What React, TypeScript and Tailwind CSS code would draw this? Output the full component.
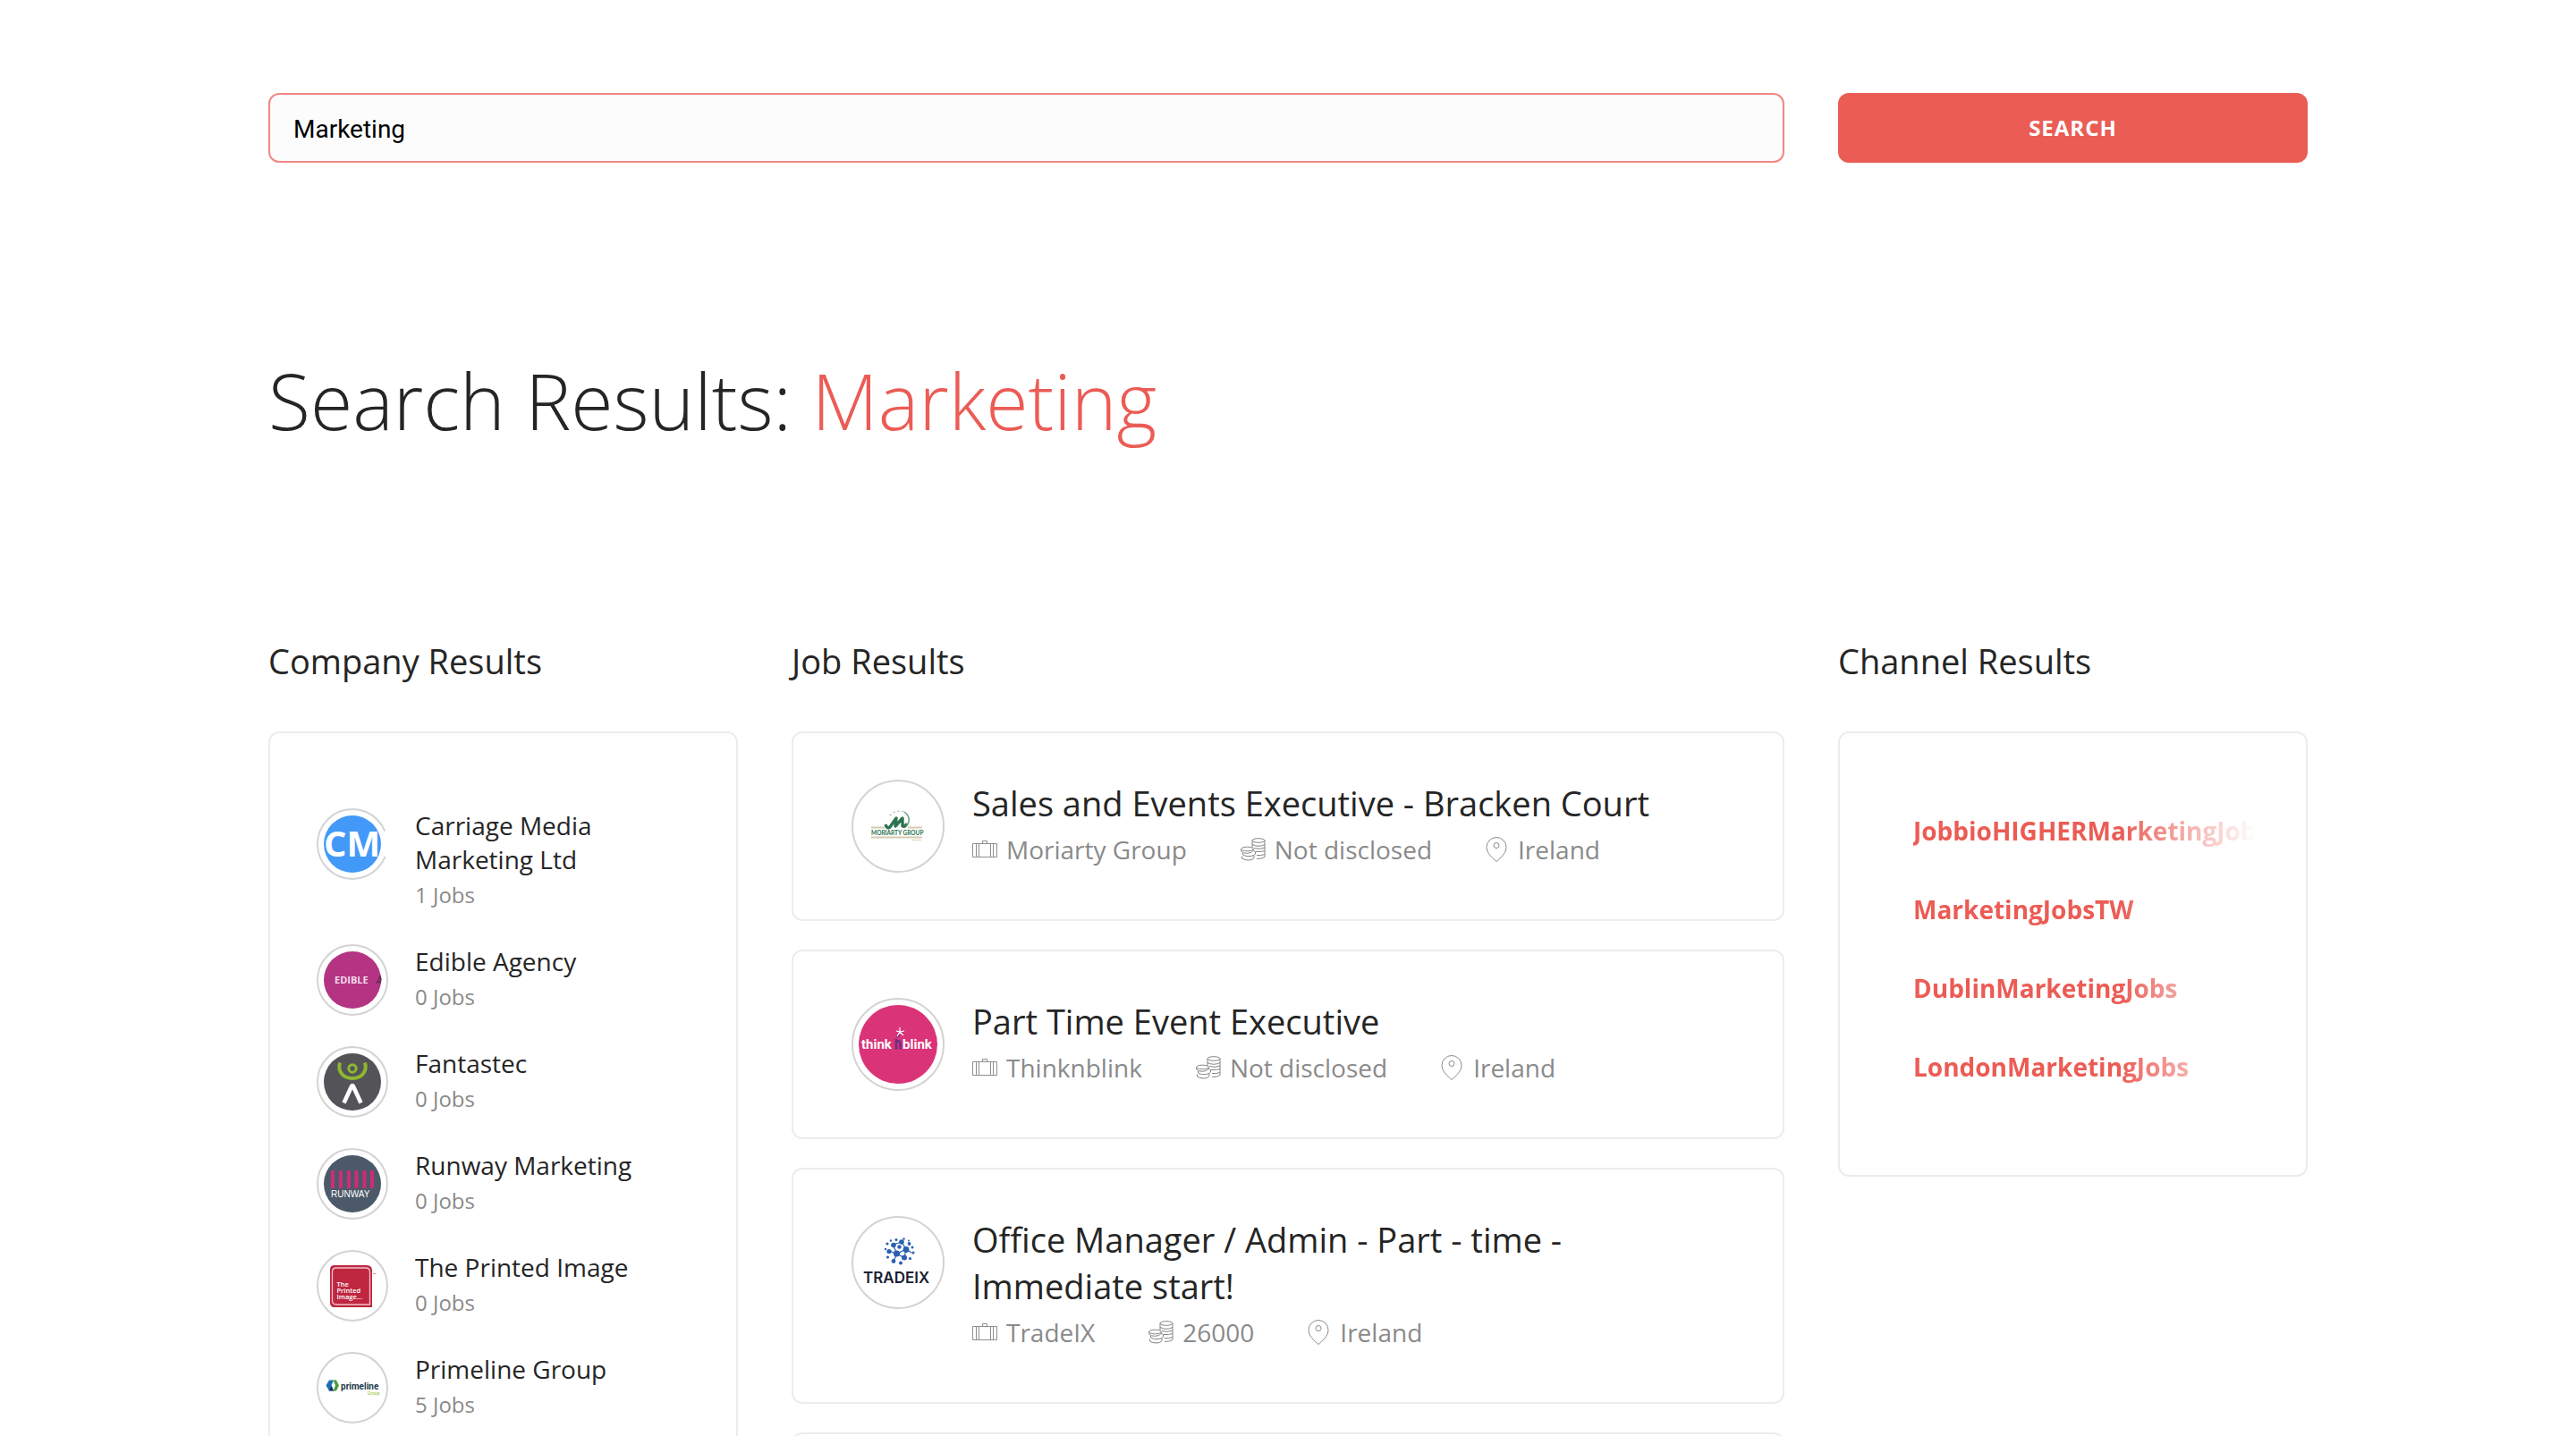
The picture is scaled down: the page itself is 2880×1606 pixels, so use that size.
import React, { useState } from "react";

const companies = [
  { name: "Carriage Media Marketing Ltd", jobs: 1, Logo: CarriageLogo },
  { name: "Edible Agency", jobs: 0, Logo: EdibleLogo },
  { name: "Fantastec", jobs: 0, Logo: FantastecLogo },
  { name: "Runway Marketing", jobs: 0, Logo: RunwayLogo },
  { name: "The Printed Image", jobs: 0, Logo: PrintedImageLogo },
  { name: "Primeline Group", jobs: 5, Logo: PrimelineLogo },
];

const jobs = [
  { title: "Sales and Events Executive - Bracken Court", company: "Moriarty Group", salary: "Not disclosed", location: "Ireland", Logo: MoriartyLogo },
  { title: "Part Time Event Executive", company: "Thinknblink", salary: "Not disclosed", location: "Ireland", Logo: ThinknblinkLogo },
  { title: "Office Manager / Admin - Part - time - Immediate start!", company: "TradeIX", salary: "26000", location: "Ireland", Logo: TradeixLogo },
];

const channels = ["JobbioHIGHERMarketingJobs", "MarketingJobsTW", "DublinMarketingJobs", "LondonMarketingJobs"];

/* Company logos, each drawn on an 80 or 104 unit disc */

function CarriageLogo() {
  return (
    <svg viewBox="0 0 80 80" className="block size-full" aria-hidden="true">
      <circle cx="40" cy="40" r="39" fill="#fff" stroke="#d3d3d3" strokeWidth="2" />
      <path d="M76 25h4v29h-4z" fill="#fff" />
      <circle cx="40" cy="40" r="32" fill="#4399f8" />
      <text x="8" y="54" fontFamily="Open Sans" fontWeight="700" fontSize="40" fill="#fff">CM</text>
    </svg>
  );
}

function EdibleLogo() {
  return (
    <svg viewBox="0 0 80 80" className="block size-full" aria-hidden="true">
      <circle cx="40" cy="40" r="39" fill="#fff" stroke="#d3d3d3" strokeWidth="2" />
      <circle cx="40" cy="40" r="32" fill="#b53383" />
      <text x="20" y="44" fontFamily="Open Sans" fontWeight="700" fontSize="11" fill="#f3dbe9">EDIBLE</text>
      <path d="M67 44l4-8 1 3-1 5M68 42h3" fill="none" stroke="#5f2c54" strokeWidth="1.4" />
    </svg>
  );
}

function FantastecLogo() {
  return (
    <svg viewBox="0 0 80 80" className="block size-full" aria-hidden="true">
      <circle cx="40" cy="40" r="39" fill="#fff" stroke="#d3d3d3" strokeWidth="2" />
      <circle cx="40" cy="40" r="32" fill="#545358" />
      <circle cx="40" cy="25" r="4.2" fill="none" stroke="#8cb82f" strokeWidth="3" />
      <path d="M26 18.500c-3 10 4 17.500 14 17.500s17-7.500 14-17.500" fill="none" stroke="#8cb82f" strokeWidth="4" />
      <path d="M30.500 63.500L39 45q1-2 2 0l8.500 18.500" fill="none" stroke="#fff" strokeWidth="4.6" />
    </svg>
  );
}

function RunwayLogo() {
  return (
    <svg viewBox="0 0 80 80" className="block size-full" aria-hidden="true">
      <circle cx="40" cy="40" r="39" fill="#fff" stroke="#d3d3d3" strokeWidth="2" />
      <circle cx="40" cy="40" r="32" fill="#4b5968" />
      <path d="M18 25v20M27 25v20M36 25v20M44.500 25v20M53.500 25v20M62 25v20" stroke="#cf2b76" strokeWidth="4" />
      <text x="16" y="55" fontFamily="Liberation Sans" fontSize="10" fill="#fff">RUNWAY</text>
    </svg>
  );
}

function PrintedImageLogo() {
  return (
    <svg viewBox="0 0 80 80" className="block size-full" aria-hidden="true">
      <circle cx="40" cy="40" r="39" fill="#fff" stroke="#d3d3d3" strokeWidth="2" />
      <path d="M20 17h36q6 0 6 6v41H20q-5 0-5-5V22q0-5 5-5z" fill="#bf263f" />
      <path d="M22 20h33q4.500 0 4.500 4.500V61H22q-4.500 0-4.500-4.500v-32q0-4.500 4.500-4.500z" fill="none" stroke="#efc3ca" strokeWidth="1.3" />
      <g fontFamily="Open Sans" fontWeight="600" fontSize="7.5" fill="#fff">
        <text x="22.5" y="40.5">The</text>
        <text x="22.5" y="47.5">Printed</text>
        <text x="22.5" y="54.5">Image...</text>
      </g>
      <path d="M63 26.500h3.500" stroke="#d98b97" strokeWidth="1" />
    </svg>
  );
}

function PrimelineLogo() {
  return (
    <svg viewBox="0 0 80 80" className="block size-full" aria-hidden="true">
      <circle cx="40" cy="40" r="39" fill="#fff" stroke="#d3d3d3" strokeWidth="2" />
      <path d="M14 31.500h5l-2.500 6 2.500 6h-5l-3.500-6z" fill="#1f6fb5" />
      <path d="M16.500 37.500l2.500 6h-5z" fill="#16335c" />
      <path d="M18.500 31.500h3.500l3 6-3 6h-3.500l2.500-6z" fill="#4a9b3c" />
      <text x="27" y="42" fontFamily="Roboto" fontWeight="700" fontSize="10" fill="#213a4a">primeline</text>
      <text x="57" y="47.500" fontFamily="Open Sans" fontWeight="600" fontSize="4.5" fill="#a4c639">Group</text>
    </svg>
  );
}

function MoriartyLogo() {
  return (
    <svg viewBox="0 0 104 104" className="block size-full" aria-hidden="true">
      <circle cx="52" cy="52" r="51" fill="#fff" stroke="#d3d3d3" strokeWidth="2" />
      <path d="M38 50c2 6 5 4 7 0l5-7-1 9 8-9 0 9q3 1 5-3" fill="none" stroke="#2a7350" strokeWidth="3.4" strokeLinejoin="round" />
      <path d="M59 36c6 4 7 11 2 16" fill="none" stroke="#5d9a7b" strokeWidth="1.5" />
      <path d="M43 40q6-7 16-4" fill="none" stroke="#9cc4ae" strokeWidth="1.4" strokeDasharray="2 3" />
      <path d="M22 53.500h15M63 53.500h16M22 64.500h57" stroke="#d6cbb0" strokeWidth="1.8" />
      <text x="22" y="61.5" fontFamily="Lato" fontWeight="700" fontSize="6.5" fill="#2a7350">MORIARTY GROUP</text>
      <path d="M67 67.500h11" stroke="#e2dccb" strokeWidth="1.5" />
    </svg>
  );
}

function ThinknblinkLogo() {
  return (
    <svg viewBox="0 0 104 104" className="block size-full" aria-hidden="true">
      <circle cx="52" cy="52" r="51" fill="#fff" stroke="#d3d3d3" strokeWidth="2" />
      <circle cx="52" cy="52" r="44" fill="#da3378" />
      <g fontFamily="Roboto" fontWeight="700" fontSize="15" fill="#fff">
        <text x="11" y="57">think</text>
        <text x="57" y="57">blink</text>
      </g>
      <path d="M50 57.500V46M50 49.500q4.500-3 4.500 1.500v6.500M50.500 43.500l3-2" fill="none" stroke="#6d2f7f" strokeWidth="2.6" />
      <path d="M54 33v5l-4-1 4 1-3 5 3-5 4 4-4-4 5-1-5 1z" fill="none" stroke="#fff" strokeWidth="1.2" />
    </svg>
  );
}

function TradeixLogo() {
  return (
    <svg viewBox="0 0 104 104" className="block size-full" aria-hidden="true">
      <circle cx="52" cy="52" r="51" fill="#fff" stroke="#d3d3d3" strokeWidth="2" />
      <path d="M42 39l9 3 10-5M51 42l-5-10M51 42l8 5M61 37l-5-8-9 3M61 37l-2 10M51 42l-4 8M61 37l6 4" fill="none" stroke="#2a5fb0" strokeWidth="1.2" />
      <g fill="#2a5fb0">
        <circle cx="50.5" cy="42" r="3.6" />
        <circle cx="61" cy="37.5" r="3.4" />
        <circle cx="59" cy="46.5" r="3" />
        <circle cx="47" cy="32.5" r="2.8" />
        <circle cx="56" cy="29" r="2.8" />
        <circle cx="53.5" cy="34.5" r="2.2" />
        <circle cx="42" cy="39.5" r="2.6" />
        <circle cx="47" cy="50.5" r="2.4" />
        <circle cx="55" cy="52.5" r="2" />
        <circle cx="65.5" cy="47.5" r="1.6" />
        <circle cx="40.5" cy="46" r="1.6" />
        <circle cx="69" cy="41" r="1.6" />
        <circle cx="68" cy="35" r="1.5" />
        <circle cx="64.5" cy="31" r="1.9" />
        <circle cx="38" cy="37" r="1.2" />
        <circle cx="40" cy="31" r="1.6" />
        <circle cx="44" cy="27.5" r="1.2" />
        <circle cx="50" cy="26.5" r="1.5" />
        <circle cx="58.5" cy="25.5" r="1.2" />
        <circle cx="64" cy="27.5" r="1" />
      </g>
      <text x="13" y="75" fontFamily="Inter" fontWeight="600" fontSize="17" fill="#1b1d33">TRADEIX</text>
    </svg>
  );
}

/* Thin line icons of the job details */

function SuitcaseIcon() {
  return (
    <svg viewBox="0 0 28 28" className="size-7 shrink-0" fill="none" stroke="#8f8f8f" aria-hidden="true">
      <path d="M.5 7.500h27v15H.5zM4.500 7v15.500M7.500 7v15.500M20.500 7v15.500M23.500 7v15.500M11.500 7.500v-3h5v3" />
    </svg>
  );
}

function CoinsIcon() {
  return (
    <svg viewBox="0 0 28 28" className="size-7 shrink-0" fill="none" stroke="#858585" aria-hidden="true">
      <ellipse cx="20" cy="4" rx="7" ry="2.3" />
      <path d="M13 4v8M27 4v18.500q-3 2-9 2M13 8.500q7 3.500 14 0M15 12.500q6 2 12-.5M17 16.500q6 .5 10-1M18 20.500q5 .5 9-1" />
      <ellipse cx="7.500" cy="13.500" rx="6.800" ry="2.300" />
      <path d="M.7 13.500v2.500q2 2.500 6.800 2.300t6.800-3v-1.800M2.500 18v2q4 2.500 9 1.500 5-1 5-2.500v-2.500l-2.200-1M1.500 21.500v2.500q3 2 7.500 2t6-2.500v-2.500" />
    </svg>
  );
}

function PinIcon() {
  return (
    <svg viewBox="0 0 24 28" className="h-7 w-6 shrink-0" fill="none" stroke="#8a8a8a" aria-hidden="true">
      <path d="M12 27.500C7 23 1 18 1 11.500a11 11 0 0 1 22 0C23 18 17 23 12 27.500z" />
      <circle cx="12" cy="9.5" r="3" />
    </svg>
  );
}

function CompanyCard() {
  return (
    <ul className="flex flex-col gap-[34px] rounded-xl border-2 border-[#ececec] px-[52px] pt-[84px] pb-20">
      {companies.map(({ name, jobs, Logo }) => (
        <li key={name}>
          <a href="#" className="flex items-start gap-[30px]">
            <span className="size-20 shrink-0">
              <Logo />
            </span>
            <span className="flex flex-col gap-1 pb-1">
              <span className="text-[28px] leading-[38px] text-[#252525]">{name}</span>
              <span className="text-2xl leading-[34px] text-[#8a8a8a]">{jobs} Jobs</span>
            </span>
          </a>
        </li>
      ))}
    </ul>
  );
}

function JobCard({ job }: { job: (typeof jobs)[number] }) {
  const { title, company, salary, location, Logo } = job;

  return (
    <article className="flex items-start gap-[31px] rounded-xl border-2 border-[#ececec] px-[65px] py-[52px]">
      <div className="size-[104px] shrink-0">
        <Logo />
      </div>
      <div className="flex flex-1 flex-col gap-2 pb-2">
        <h3 className="text-[38px] leading-[52px] text-[#252525]">
          <a href="#">{title}</a>
        </h3>
        <ul className="flex items-center gap-[60px] text-[28px] leading-9 text-[#8a8a8a]">
          <li className="flex items-center gap-2.5">
            <SuitcaseIcon />
            {company}
          </li>
          <li className="flex items-center gap-2.5">
            <CoinsIcon />
            {salary}
          </li>
          <li className="flex items-center gap-3">
            <PinIcon />
            {location}
          </li>
        </ul>
      </div>
    </article>
  );
}

export default function App() {
  const [query, setQuery] = useState("Marketing");

  return (
    <main className="h-screen overflow-hidden bg-white px-[300px] pt-[104px] font-['Open_Sans',sans-serif]">
      {/* Search bar */}
      <form className="grid grid-cols-12 gap-x-[60px]" onSubmit={(e) => e.preventDefault()}>
        <input
          type="text"
          aria-label="Search"
          value={query}
          onChange={(e) => setQuery(e.target.value)}
          className="col-span-9 h-[78px] rounded-xl border-2 border-[#f28784] bg-[#fcfcfc] px-[26px] pt-0.5 font-[Roboto,sans-serif] text-[28px] text-black outline-none"
        />
        <button type="submit" className="col-span-3 h-[78px] rounded-xl bg-[#eb5c55] text-2xl font-bold tracking-[1px] text-white">
          SEARCH
        </button>
      </form>

      <h1 className="pt-[206px] text-[86px] leading-[120px] font-light text-[#252525]">
        Search Results: <span className="text-[#eb5c55]">Marketing</span>
      </h1>

      {/* Results */}
      <div className="grid grid-cols-12 items-start gap-x-[60px] pt-[205px]">
        <section className="col-span-3">
          <h2 className="pb-[53px] text-[38px] leading-[52px] text-[#252525]">Company Results</h2>
          <CompanyCard />
        </section>

        <section className="col-span-6">
          <h2 className="pb-[53px] text-[38px] leading-[52px] text-[#252525]">Job Results</h2>
          <div className="flex flex-col gap-8">
            {jobs.map((job) => (
              <JobCard key={job.title} job={job} />
            ))}
            <article className="h-[212px] rounded-xl border-2 border-[#ececec]" />
          </div>
        </section>

        <section className="col-span-3">
          <h2 className="pb-[53px] text-[38px] leading-[52px] text-[#252525]">Channel Results</h2>
          <ul className="flex flex-col gap-[50px] rounded-xl border-2 border-[#ececec] pt-[90px] pr-14 pb-[102px] pl-[82px]">
            {channels.map((channel) => (
              <li key={channel} className="overflow-hidden mask-r-from-60% mask-r-to-100%">
                <a href="#" className="text-[28px] leading-[38px] font-bold text-[#eb5c55]">
                  {channel}
                </a>
              </li>
            ))}
          </ul>
        </section>
      </div>
    </main>
  );
}
